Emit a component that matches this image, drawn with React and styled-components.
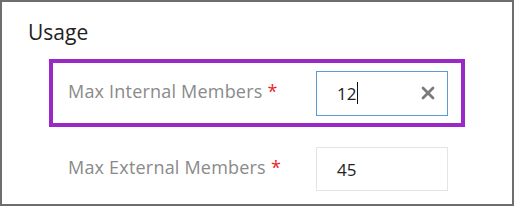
import styled, { createGlobalStyle } from 'styled-components';

const GlobalStyle = createGlobalStyle`
	html, body {
		margin: 0;
		padding: 0;
		background: #ffffff;
	}
	body {
		font-family: 'Open Sans', 'Liberation Sans', sans-serif;
	}
`;

const Card = styled.div`
	box-sizing: border-box;
	width: 514px;
	height: 206px;
	border: 2px solid #6e6e6e;
	padding: 16px 0 0 26px;
	background: #ffffff;
`;

const Heading = styled.h2`
	margin: 0 0 13px;
	font-size: 21px;
	line-height: 28px;
	font-weight: 400;
	color: #222222;
`;

const Row = styled.div`
	box-sizing: border-box;
	display: flex;
	align-items: center;
	justify-content: space-between;
	width: 416px;
	height: 68px;
	margin: 0 0 8px 21px;
	padding: 0 13px 0 15px;
	border: 4px solid ${(props) => (props.highlight ? '#9a29c8' : 'transparent')};
`;

const Label = styled.div`
	font-size: 18px;
	letter-spacing: 0.2px;
	color: #8a8a8a;
	padding-bottom: 4px;
`;

const Required = styled.span`
	color: #e8262b;
	margin-left: 5px;
`;

const Field = styled.div`
	box-sizing: border-box;
	display: flex;
	align-items: center;
	width: 132px;
	height: ${(props) => (props.focused ? '45px' : '44px')};
	padding: 0 10px 0 20px;
	border: 1px solid ${(props) => (props.focused ? '#5b9bd5' : '#e4e4e4')};
	font-size: 17px;
	color: #222222;
	background: #ffffff;
`;

const Value = styled.span`
	flex: 1;
	display: flex;
	align-items: center;
`;

const Caret = styled.span`
	display: inline-block;
	width: 1px;
	height: 22px;
	background: #111111;
	margin-left: 1px;
`;

const Clear = styled.svg`
	width: 14px;
	height: 14px;
	margin-right: 2px;
`;

function ClearIcon() {
	return (
		<Clear viewBox="0 0 14 14">
			<path d="M2 2 L12 12 M12 2 L2 12" stroke="#7a7a7a" strokeWidth="2.8" strokeLinecap="round" />
		</Clear>
	);
}

function App() {
	return (
		<Card>
			<GlobalStyle />
			<Heading>Usage</Heading>
			<Row highlight>
				<Label>
					Max Internal Members<Required>*</Required>
				</Label>
				<Field focused>
					<Value>
						12
						<Caret />
					</Value>
					<ClearIcon />
				</Field>
			</Row>
			<Row>
				<Label>
					Max External Members<Required>*</Required>
				</Label>
				<Field>
					<Value>45</Value>
				</Field>
			</Row>
		</Card>
	);
}

export default App;
